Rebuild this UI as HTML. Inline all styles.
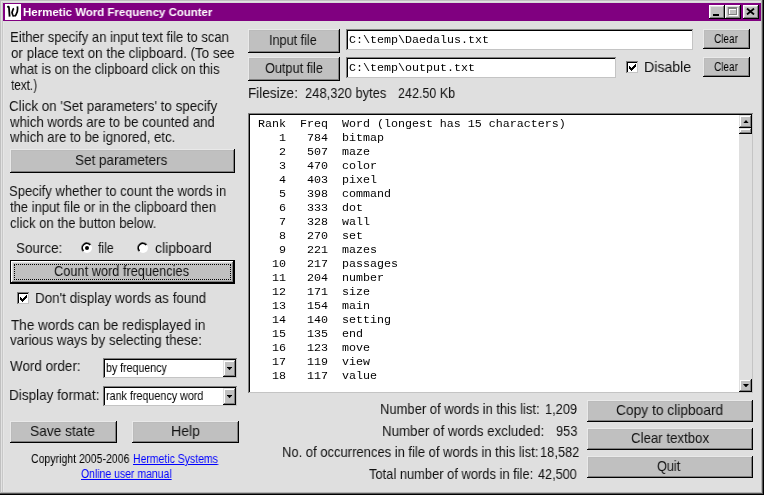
<!DOCTYPE html>
<html><head><meta charset="utf-8"><style>
html,body{margin:0;padding:0;width:764px;height:495px;overflow:hidden;background:#dfdfdf}
body{position:relative;font-family:'Liberation Sans', sans-serif}
.t{will-change:transform}
</style></head><body>
<div style="position:absolute;left:0px;top:0px;width:764px;height:1px;background:#c0c0c0"></div>
<div style="position:absolute;left:0px;top:0px;width:1px;height:495px;background:#c0c0c0"></div>
<div style="position:absolute;left:1px;top:1px;width:762px;height:1px;background:#e2e2e2"></div>
<div style="position:absolute;left:1px;top:1px;width:1px;height:493px;background:#e2e2e2"></div>
<div style="position:absolute;left:2px;top:2px;width:760px;height:1px;background:#d8dad8"></div>
<div style="position:absolute;left:2px;top:2px;width:1px;height:491px;background:#c8c8c8"></div>
<div style="position:absolute;left:3px;top:3px;width:1px;height:489px;background:#e6e6e6"></div>
<div style="position:absolute;left:761px;top:1px;width:1px;height:493px;background:#b4b4b4"></div>
<div style="position:absolute;left:1px;top:492px;width:761px;height:1px;background:#b4b4b4"></div>
<div style="position:absolute;left:762px;top:0px;width:1px;height:495px;background:#555"></div>
<div style="position:absolute;left:0px;top:493px;width:763px;height:1px;background:#555"></div>
<div style="position:absolute;left:763px;top:0px;width:1px;height:495px;background:#000"></div>
<div style="position:absolute;left:0px;top:494px;width:764px;height:1px;background:#000"></div>
<div style="position:absolute;left:3px;top:3px;width:758px;height:18px;background:#800080"></div>
<div style="position:absolute;left:5px;top:4px;width:16px;height:16px;background:#fff"></div>
<svg style="position:absolute;left:5px;top:4px" width="16" height="16" viewBox="0 0 16 16"><path d="M2.2 2.8 L3.6 2.6 L4 4 L4.6 12.6" stroke="#000" stroke-width="1.8" fill="none" stroke-linejoin="round"/><path d="M9 4.6 L8.2 5 L7 8.6 L7.6 10.5 L8.6 12.6" stroke="#000" stroke-width="1.7" fill="none" stroke-linejoin="round"/><path d="M12.4 2.4 L12.6 4.5 L12.3 7.6 L11 10.8 L9.4 12.4" stroke="#000" stroke-width="1.7" fill="none" stroke-linejoin="round"/></svg>
<div class="t" style="position:absolute;left:22.66px;top:7.20px;font-family:'Liberation Sans', sans-serif;font-size:11.5px;line-height:11.5px;font-weight:bold;color:#fff;white-space:pre;transform:scaleX(0.9958);transform-origin:0 0;">Hermetic Word Frequency Counter</div>
<div style="position:absolute;left:709px;top:5px;width:16px;height:14px;background:#c0c0c0;box-shadow:inset -1px -1px #000, inset 1px 1px #fff, inset -2px -2px #808080, inset 2px 2px #dfdfdf"></div>
<div style="position:absolute;left:725px;top:5px;width:16px;height:14px;background:#c0c0c0;box-shadow:inset -1px -1px #000, inset 1px 1px #fff, inset -2px -2px #808080, inset 2px 2px #dfdfdf"></div>
<div style="position:absolute;left:743px;top:5px;width:16px;height:14px;background:#c0c0c0;box-shadow:inset -1px -1px #000, inset 1px 1px #fff, inset -2px -2px #808080, inset 2px 2px #dfdfdf"></div>
<div style="position:absolute;left:713px;top:14px;width:6px;height:2px;background:#000"></div>
<div style="position:absolute;left:729px;top:8px;width:9px;height:8px;box-shadow:inset 0 0 0 1px #fff, inset 0 2px #fff"></div>
<div style="position:absolute;left:728px;top:7px;width:9px;height:8px;box-shadow:inset 0 0 0 1px #808080, inset 0 2px #808080"></div>
<svg style="position:absolute;left:746px;top:8px" width="9" height="7" viewBox="0 0 9 7"><path d="M1 0.6 L8 6.4 M8 0.6 L1 6.4" stroke="#000" stroke-width="1.9"/></svg>
<div class="t" style="position:absolute;left:10.03px;top:30.20px;font-family:'Liberation Sans', sans-serif;font-size:14.5px;line-height:14.5px;font-weight:normal;color:#121212;white-space:pre;transform:scaleX(0.8993);transform-origin:0 0;">Either specify an input text file to scan</div>
<div class="t" style="position:absolute;left:10.73px;top:46.20px;font-family:'Liberation Sans', sans-serif;font-size:14.5px;line-height:14.5px;font-weight:normal;color:#121212;white-space:pre;transform:scaleX(0.9242);transform-origin:0 0;">or place text on the clipboard. (To see</div>
<div class="t" style="position:absolute;left:9.94px;top:62.30px;font-family:'Liberation Sans', sans-serif;font-size:14.5px;line-height:14.5px;font-weight:normal;color:#121212;white-space:pre;transform:scaleX(0.9065);transform-origin:0 0;">what is on the clipboard click on this</div>
<div class="t" style="position:absolute;left:10.78px;top:78.10px;font-family:'Liberation Sans', sans-serif;font-size:14.5px;line-height:14.5px;font-weight:normal;color:#121212;white-space:pre;transform:scaleX(0.8123);transform-origin:0 0;">text.)</div>
<div class="t" style="position:absolute;left:9.21px;top:98.70px;font-family:'Liberation Sans', sans-serif;font-size:14.5px;line-height:14.5px;font-weight:normal;color:#121212;white-space:pre;transform:scaleX(0.9232);transform-origin:0 0;">Click on &#x27;Set parameters&#x27; to specify</div>
<div class="t" style="position:absolute;left:9.94px;top:114.50px;font-family:'Liberation Sans', sans-serif;font-size:14.5px;line-height:14.5px;font-weight:normal;color:#121212;white-space:pre;transform:scaleX(0.9107);transform-origin:0 0;">which words are to be counted and</div>
<div class="t" style="position:absolute;left:9.94px;top:130.30px;font-family:'Liberation Sans', sans-serif;font-size:14.5px;line-height:14.5px;font-weight:normal;color:#121212;white-space:pre;transform:scaleX(0.9072);transform-origin:0 0;">which are to be ignored, etc.</div>
<div class="t" style="position:absolute;left:9.24px;top:184.10px;font-family:'Liberation Sans', sans-serif;font-size:14.5px;line-height:14.5px;font-weight:normal;color:#121212;white-space:pre;transform:scaleX(0.9013);transform-origin:0 0;">Specify whether to count the words in</div>
<div class="t" style="position:absolute;left:9.94px;top:199.80px;font-family:'Liberation Sans', sans-serif;font-size:14.5px;line-height:14.5px;font-weight:normal;color:#121212;white-space:pre;transform:scaleX(0.8969);transform-origin:0 0;">the input file or in the clipboard then</div>
<div class="t" style="position:absolute;left:9.94px;top:215.60px;font-family:'Liberation Sans', sans-serif;font-size:14.5px;line-height:14.5px;font-weight:normal;color:#121212;white-space:pre;transform:scaleX(0.9032);transform-origin:0 0;">click on the button below.</div>
<div class="t" style="position:absolute;left:10.73px;top:317.70px;font-family:'Liberation Sans', sans-serif;font-size:14.5px;line-height:14.5px;font-weight:normal;color:#121212;white-space:pre;transform:scaleX(0.9308);transform-origin:0 0;">The words can be redisplayed in</div>
<div class="t" style="position:absolute;left:9.94px;top:333.10px;font-family:'Liberation Sans', sans-serif;font-size:14.5px;line-height:14.5px;font-weight:normal;color:#121212;white-space:pre;transform:scaleX(0.9228);transform-origin:0 0;">various ways by selecting these:</div>
<div style="position:absolute;left:10px;top:149px;width:225px;height:24px;background:#c0c0c0;box-shadow:inset -1px -1px #000, inset 1px 1px #e9e9e9, inset -2px -2px #808080, inset 2px 2px #bbbbbb"></div>
<div class="t" style="position:absolute;left:74.67px;top:152.90px;font-family:'Liberation Sans', sans-serif;font-size:14.5px;line-height:14.5px;font-weight:normal;color:#121212;white-space:pre;transform:scaleX(0.9307);transform-origin:0 0;">Set parameters</div>
<div class="t" style="position:absolute;left:16.21px;top:240.70px;font-family:'Liberation Sans', sans-serif;font-size:14.5px;line-height:14.5px;font-weight:normal;color:#121212;white-space:pre;transform:scaleX(0.9250);transform-origin:0 0;">Source:</div>
<svg style="position:absolute;left:80.5px;top:241.5px" width="12" height="12" viewBox="0 0 12 12"><circle cx="6" cy="6" r="5" fill="#fff"/><path d="M10.2 2.6 A5.3 5.3 0 0 0 1.6 9.4" stroke="#808080" stroke-width="1" fill="none"/><path d="M9.3 2.9 A4.3 4.3 0 0 0 2.5 8.9" stroke="#000" stroke-width="1.5" fill="none"/><circle cx="6" cy="6" r="2" fill="#000"/></svg>
<div class="t" style="position:absolute;left:98.20px;top:241.00px;font-family:'Liberation Sans', sans-serif;font-size:14.5px;line-height:14.5px;font-weight:normal;color:#121212;white-space:pre;transform:scaleX(0.8451);transform-origin:0 0;">file</div>
<svg style="position:absolute;left:136.5px;top:241.5px" width="12" height="12" viewBox="0 0 12 12"><circle cx="6" cy="6" r="5" fill="#fff"/><path d="M10.2 2.6 A5.3 5.3 0 0 0 1.6 9.4" stroke="#808080" stroke-width="1" fill="none"/><path d="M9.3 2.9 A4.3 4.3 0 0 0 2.5 8.9" stroke="#000" stroke-width="1.5" fill="none"/></svg>
<div class="t" style="position:absolute;left:154.71px;top:241.00px;font-family:'Liberation Sans', sans-serif;font-size:14.5px;line-height:14.5px;font-weight:normal;color:#121212;white-space:pre;transform:scaleX(0.9655);transform-origin:0 0;">clipboard</div>
<div style="position:absolute;left:10px;top:260px;width:225px;height:24px;background:#c0c0c0;box-shadow:inset 0 0 0 1px #000, inset -2px -2px #000, inset 2px 2px #fff, inset -3px -3px #808080, inset 3px 3px #dfdfdf"></div>
<div style="position:absolute;left:14px;top:264px;width:217px;height:16px;border:1px dotted #000;box-sizing:border-box"></div>
<div class="t" style="position:absolute;left:54.09px;top:264.30px;font-family:'Liberation Sans', sans-serif;font-size:14.5px;line-height:14.5px;font-weight:normal;color:#121212;white-space:pre;transform:scaleX(0.8814);transform-origin:0 0;">Count word frequencies</div>
<div style="position:absolute;left:17px;top:292px;width:12px;height:12px;background:#fff;box-shadow:inset 1px 1px #808080, inset -1px -1px #c4c4c4, inset 2px 2px #000"></div>
<svg style="position:absolute;left:19.5px;top:294.5px" width="7" height="7" viewBox="0 0 7 7" shape-rendering="crispEdges"><rect x="6" y="0" width="1" height="1"/><rect x="5" y="1" width="1" height="1"/><rect x="6" y="1" width="1" height="1"/><rect x="0" y="2" width="1" height="1"/><rect x="4" y="2" width="1" height="1"/><rect x="5" y="2" width="1" height="1"/><rect x="6" y="2" width="1" height="1"/><rect x="0" y="3" width="1" height="1"/><rect x="1" y="3" width="1" height="1"/><rect x="3" y="3" width="1" height="1"/><rect x="4" y="3" width="1" height="1"/><rect x="5" y="3" width="1" height="1"/><rect x="0" y="4" width="1" height="1"/><rect x="1" y="4" width="1" height="1"/><rect x="2" y="4" width="1" height="1"/><rect x="3" y="4" width="1" height="1"/><rect x="4" y="4" width="1" height="1"/><rect x="1" y="5" width="1" height="1"/><rect x="2" y="5" width="1" height="1"/><rect x="3" y="5" width="1" height="1"/><rect x="2" y="6" width="1" height="1"/></svg>
<div class="t" style="position:absolute;left:34.68px;top:291.00px;font-family:'Liberation Sans', sans-serif;font-size:14.5px;line-height:14.5px;font-weight:normal;color:#121212;white-space:pre;transform:scaleX(0.9257);transform-origin:0 0;">Don&#x27;t display words as found</div>
<div class="t" style="position:absolute;left:9.93px;top:359.30px;font-family:'Liberation Sans', sans-serif;font-size:14.5px;line-height:14.5px;font-weight:normal;color:#121212;white-space:pre;transform:scaleX(0.9254);transform-origin:0 0;">Word order:</div>
<div class="t" style="position:absolute;left:9.20px;top:387.50px;font-family:'Liberation Sans', sans-serif;font-size:14.5px;line-height:14.5px;font-weight:normal;color:#121212;white-space:pre;transform:scaleX(0.9342);transform-origin:0 0;">Display format:</div>
<div style="position:absolute;left:103px;top:358px;width:134px;height:20px;background:#fff;box-shadow:inset 1px 1px #808080, inset -1px -1px #c4c4c4, inset 2px 2px #000"></div>
<div style="position:absolute;left:223px;top:360px;width:13px;height:17px;background:#c0c0c0;box-shadow:inset -1px -1px #000, inset 1px 1px #dfdfdf, inset -2px -2px #808080, inset 2px 2px #fff"></div>
<svg style="position:absolute;left:227px;top:367px" width="5" height="3" viewBox="0 0 5 3"><path d="M-0.3 0 H5.3 L2.5 3.2 Z" fill="#000"/></svg>
<div class="t" style="position:absolute;left:106.48px;top:362.00px;font-family:'Liberation Sans', sans-serif;font-size:12px;line-height:12px;font-weight:normal;color:#000;white-space:pre;transform:scaleX(0.8840);transform-origin:0 0;">by frequency</div>
<div style="position:absolute;left:103px;top:386px;width:134px;height:20px;background:#fff;box-shadow:inset 1px 1px #808080, inset -1px -1px #c4c4c4, inset 2px 2px #000"></div>
<div style="position:absolute;left:223px;top:388px;width:13px;height:17px;background:#c0c0c0;box-shadow:inset -1px -1px #000, inset 1px 1px #dfdfdf, inset -2px -2px #808080, inset 2px 2px #fff"></div>
<svg style="position:absolute;left:227px;top:395px" width="5" height="3" viewBox="0 0 5 3"><path d="M-0.3 0 H5.3 L2.5 3.2 Z" fill="#000"/></svg>
<div class="t" style="position:absolute;left:106.48px;top:390.40px;font-family:'Liberation Sans', sans-serif;font-size:12px;line-height:12px;font-weight:normal;color:#000;white-space:pre;transform:scaleX(0.8950);transform-origin:0 0;">rank frequency word</div>
<div style="position:absolute;left:10px;top:421px;width:107px;height:22px;background:#c0c0c0;box-shadow:inset -1px -1px #000, inset 1px 1px #e9e9e9, inset -2px -2px #808080, inset 2px 2px #bbbbbb"></div>
<div class="t" style="position:absolute;left:30.25px;top:424.20px;font-family:'Liberation Sans', sans-serif;font-size:14.5px;line-height:14.5px;font-weight:normal;color:#121212;white-space:pre;transform:scaleX(0.9463);transform-origin:0 0;">Save state</div>
<div style="position:absolute;left:132px;top:421px;width:107px;height:22px;background:#c0c0c0;box-shadow:inset -1px -1px #000, inset 1px 1px #e9e9e9, inset -2px -2px #808080, inset 2px 2px #bbbbbb"></div>
<div class="t" style="position:absolute;left:170.63px;top:424.20px;font-family:'Liberation Sans', sans-serif;font-size:14.5px;line-height:14.5px;font-weight:normal;color:#121212;white-space:pre;transform:scaleX(0.9718);transform-origin:0 0;">Help</div>
<div class="t" style="position:absolute;left:30.80px;top:453.30px;font-family:'Liberation Sans', sans-serif;font-size:12px;line-height:12px;font-weight:normal;color:#000;white-space:pre;transform:scaleX(0.8777);transform-origin:0 0;">Copyright 2005-2006</div>
<div class="t" style="position:absolute;left:132.57px;top:453.30px;font-family:'Liberation Sans', sans-serif;font-size:12px;line-height:12px;font-weight:normal;color:#0000ff;white-space:pre;transform:scaleX(0.8725);transform-origin:0 0;text-decoration:underline">Hermetic Systems</div>
<div class="t" style="position:absolute;left:80.65px;top:468.30px;font-family:'Liberation Sans', sans-serif;font-size:12px;line-height:12px;font-weight:normal;color:#0000ff;white-space:pre;transform:scaleX(0.8710);transform-origin:0 0;text-decoration:underline">Online user manual</div>
<div style="position:absolute;left:248px;top:29px;width:92px;height:24px;background:#c0c0c0;box-shadow:inset -1px -1px #000, inset 1px 1px #e9e9e9, inset -2px -2px #808080, inset 2px 2px #bbbbbb"></div>
<div class="t" style="position:absolute;left:269.34px;top:33.20px;font-family:'Liberation Sans', sans-serif;font-size:14.5px;line-height:14.5px;font-weight:normal;color:#121212;white-space:pre;transform:scaleX(0.8720);transform-origin:0 0;">Input file</div>
<div style="position:absolute;left:248px;top:57px;width:92px;height:24px;background:#c0c0c0;box-shadow:inset -1px -1px #000, inset 1px 1px #e9e9e9, inset -2px -2px #808080, inset 2px 2px #bbbbbb"></div>
<div class="t" style="position:absolute;left:264.72px;top:61.30px;font-family:'Liberation Sans', sans-serif;font-size:14.5px;line-height:14.5px;font-weight:normal;color:#121212;white-space:pre;transform:scaleX(0.8768);transform-origin:0 0;">Output file</div>
<div style="position:absolute;left:346px;top:29px;width:347px;height:21px;background:#fff;box-shadow:inset 1px 1px #808080, inset -1px -1px #c4c4c4, inset 2px 2px #000"></div>
<div class="t" style="position:absolute;left:349.00px;top:35.10px;font-family:'Liberation Mono', monospace;font-size:11.67px;line-height:11.67px;font-weight:normal;color:#000;white-space:pre;">C:\temp\Daedalus.txt</div>
<div style="position:absolute;left:346px;top:57px;width:270px;height:21px;background:#fff;box-shadow:inset 1px 1px #808080, inset -1px -1px #c4c4c4, inset 2px 2px #000"></div>
<div class="t" style="position:absolute;left:349.00px;top:63.10px;font-family:'Liberation Mono', monospace;font-size:11.67px;line-height:11.67px;font-weight:normal;color:#000;white-space:pre;">C:\temp\output.txt</div>
<div style="position:absolute;left:626px;top:61px;width:12px;height:12px;background:#fff;box-shadow:inset 1px 1px #808080, inset -1px -1px #c4c4c4, inset 2px 2px #000"></div>
<svg style="position:absolute;left:628.5px;top:63.5px" width="7" height="7" viewBox="0 0 7 7" shape-rendering="crispEdges"><rect x="6" y="0" width="1" height="1"/><rect x="5" y="1" width="1" height="1"/><rect x="6" y="1" width="1" height="1"/><rect x="0" y="2" width="1" height="1"/><rect x="4" y="2" width="1" height="1"/><rect x="5" y="2" width="1" height="1"/><rect x="6" y="2" width="1" height="1"/><rect x="0" y="3" width="1" height="1"/><rect x="1" y="3" width="1" height="1"/><rect x="3" y="3" width="1" height="1"/><rect x="4" y="3" width="1" height="1"/><rect x="5" y="3" width="1" height="1"/><rect x="0" y="4" width="1" height="1"/><rect x="1" y="4" width="1" height="1"/><rect x="2" y="4" width="1" height="1"/><rect x="3" y="4" width="1" height="1"/><rect x="4" y="4" width="1" height="1"/><rect x="1" y="5" width="1" height="1"/><rect x="2" y="5" width="1" height="1"/><rect x="3" y="5" width="1" height="1"/><rect x="2" y="6" width="1" height="1"/></svg>
<div class="t" style="position:absolute;left:643.62px;top:59.80px;font-family:'Liberation Sans', sans-serif;font-size:14.5px;line-height:14.5px;font-weight:normal;color:#121212;white-space:pre;transform:scaleX(0.9747);transform-origin:0 0;">Disable</div>
<div style="position:absolute;left:703px;top:29px;width:47px;height:20px;background:#c0c0c0;box-shadow:inset -1px -1px #000, inset 1px 1px #e9e9e9, inset -2px -2px #808080, inset 2px 2px #bbbbbb"></div>
<div class="t" style="position:absolute;left:714.20px;top:33.40px;font-family:'Liberation Sans', sans-serif;font-size:12px;line-height:12px;font-weight:normal;color:#000;white-space:pre;transform:scaleX(0.8338);transform-origin:0 0;">Clear</div>
<div style="position:absolute;left:703px;top:57px;width:47px;height:20px;background:#c0c0c0;box-shadow:inset -1px -1px #000, inset 1px 1px #e9e9e9, inset -2px -2px #808080, inset 2px 2px #bbbbbb"></div>
<div class="t" style="position:absolute;left:714.20px;top:61.40px;font-family:'Liberation Sans', sans-serif;font-size:12px;line-height:12px;font-weight:normal;color:#000;white-space:pre;transform:scaleX(0.8338);transform-origin:0 0;">Clear</div>
<div class="t" style="position:absolute;left:247.66px;top:86.30px;font-family:'Liberation Sans', sans-serif;font-size:14.5px;line-height:14.5px;font-weight:normal;color:#121212;white-space:pre;transform:scaleX(0.9376);transform-origin:0 0;">Filesize:</div>
<div class="t" style="position:absolute;left:305.25px;top:86.30px;font-family:'Liberation Sans', sans-serif;font-size:14.5px;line-height:14.5px;font-weight:normal;color:#121212;white-space:pre;transform:scaleX(0.8934);transform-origin:0 0;">248,320 bytes</div>
<div class="t" style="position:absolute;left:398.34px;top:86.30px;font-family:'Liberation Sans', sans-serif;font-size:14.5px;line-height:14.5px;font-weight:normal;color:#121212;white-space:pre;transform:scaleX(0.8645);transform-origin:0 0;">242.50 Kb</div>
<div style="position:absolute;left:248px;top:113px;width:505px;height:280px;background:#fff;box-shadow:inset 1px 1px #808080, inset -1px -1px #c4c4c4, inset 2px 2px #000"></div>
<div style="position:absolute;left:739px;top:115px;width:13px;height:276px;background:#dfdfdf"></div>
<div style="position:absolute;left:739px;top:115px;width:13px;height:13px;background:#c0c0c0;box-shadow:inset -1px -1px #000, inset 1px 1px #dfdfdf, inset -2px -2px #808080, inset 2px 2px #fff"></div>
<svg style="position:absolute;left:742.5px;top:119.8px" width="6" height="3.4" viewBox="0 0 6 3.4"><path d="M0 3.4 H6 L3 0 Z" fill="#000"/></svg>
<div style="position:absolute;left:739px;top:128px;width:13px;height:6px;background:#c0c0c0;box-shadow:inset -1px -1px #000, inset 1px 1px #dfdfdf, inset -2px -2px #808080, inset 2px 2px #fff"></div>
<div style="position:absolute;left:739px;top:379px;width:13px;height:13px;background:#c0c0c0;box-shadow:inset -1px -1px #000, inset 1px 1px #dfdfdf, inset -2px -2px #808080, inset 2px 2px #fff"></div>
<svg style="position:absolute;left:742.5px;top:383.8px" width="6" height="3.4" viewBox="0 0 6 3.4"><path d="M0 0 H6 L3 3.4 Z" fill="#000"/></svg>
<div class="t" style="position:absolute;left:258.00px;top:118.60px;font-family:'Liberation Mono', monospace;font-size:11.67px;line-height:11.67px;font-weight:normal;color:#000;white-space:pre;">Rank  Freq  Word (longest has 15 characters)</div>
<div class="t" style="position:absolute;left:258.00px;top:132.60px;font-family:'Liberation Mono', monospace;font-size:11.67px;line-height:11.67px;font-weight:normal;color:#000;white-space:pre;">   1   784  bitmap</div>
<div class="t" style="position:absolute;left:258.00px;top:146.60px;font-family:'Liberation Mono', monospace;font-size:11.67px;line-height:11.67px;font-weight:normal;color:#000;white-space:pre;">   2   507  maze</div>
<div class="t" style="position:absolute;left:258.00px;top:160.60px;font-family:'Liberation Mono', monospace;font-size:11.67px;line-height:11.67px;font-weight:normal;color:#000;white-space:pre;">   3   470  color</div>
<div class="t" style="position:absolute;left:258.00px;top:174.60px;font-family:'Liberation Mono', monospace;font-size:11.67px;line-height:11.67px;font-weight:normal;color:#000;white-space:pre;">   4   403  pixel</div>
<div class="t" style="position:absolute;left:258.00px;top:188.60px;font-family:'Liberation Mono', monospace;font-size:11.67px;line-height:11.67px;font-weight:normal;color:#000;white-space:pre;">   5   398  command</div>
<div class="t" style="position:absolute;left:258.00px;top:202.60px;font-family:'Liberation Mono', monospace;font-size:11.67px;line-height:11.67px;font-weight:normal;color:#000;white-space:pre;">   6   333  dot</div>
<div class="t" style="position:absolute;left:258.00px;top:216.60px;font-family:'Liberation Mono', monospace;font-size:11.67px;line-height:11.67px;font-weight:normal;color:#000;white-space:pre;">   7   328  wall</div>
<div class="t" style="position:absolute;left:258.00px;top:230.60px;font-family:'Liberation Mono', monospace;font-size:11.67px;line-height:11.67px;font-weight:normal;color:#000;white-space:pre;">   8   270  set</div>
<div class="t" style="position:absolute;left:258.00px;top:244.60px;font-family:'Liberation Mono', monospace;font-size:11.67px;line-height:11.67px;font-weight:normal;color:#000;white-space:pre;">   9   221  mazes</div>
<div class="t" style="position:absolute;left:258.00px;top:258.60px;font-family:'Liberation Mono', monospace;font-size:11.67px;line-height:11.67px;font-weight:normal;color:#000;white-space:pre;">  10   217  passages</div>
<div class="t" style="position:absolute;left:258.00px;top:272.60px;font-family:'Liberation Mono', monospace;font-size:11.67px;line-height:11.67px;font-weight:normal;color:#000;white-space:pre;">  11   204  number</div>
<div class="t" style="position:absolute;left:258.00px;top:286.60px;font-family:'Liberation Mono', monospace;font-size:11.67px;line-height:11.67px;font-weight:normal;color:#000;white-space:pre;">  12   171  size</div>
<div class="t" style="position:absolute;left:258.00px;top:300.60px;font-family:'Liberation Mono', monospace;font-size:11.67px;line-height:11.67px;font-weight:normal;color:#000;white-space:pre;">  13   154  main</div>
<div class="t" style="position:absolute;left:258.00px;top:314.60px;font-family:'Liberation Mono', monospace;font-size:11.67px;line-height:11.67px;font-weight:normal;color:#000;white-space:pre;">  14   140  setting</div>
<div class="t" style="position:absolute;left:258.00px;top:328.60px;font-family:'Liberation Mono', monospace;font-size:11.67px;line-height:11.67px;font-weight:normal;color:#000;white-space:pre;">  15   135  end</div>
<div class="t" style="position:absolute;left:258.00px;top:342.60px;font-family:'Liberation Mono', monospace;font-size:11.67px;line-height:11.67px;font-weight:normal;color:#000;white-space:pre;">  16   123  move</div>
<div class="t" style="position:absolute;left:258.00px;top:356.60px;font-family:'Liberation Mono', monospace;font-size:11.67px;line-height:11.67px;font-weight:normal;color:#000;white-space:pre;">  17   119  view</div>
<div class="t" style="position:absolute;left:258.00px;top:370.60px;font-family:'Liberation Mono', monospace;font-size:11.67px;line-height:11.67px;font-weight:normal;color:#000;white-space:pre;">  18   117  value</div>
<div class="t" style="position:absolute;left:380.25px;top:401.90px;font-family:'Liberation Sans', sans-serif;font-size:14.5px;line-height:14.5px;font-weight:normal;color:#121212;white-space:pre;transform:scaleX(0.8965);transform-origin:0 0;">Number of words in this list:</div>
<div class="t" style="position:absolute;left:545.00px;top:401.90px;font-family:'Liberation Sans', sans-serif;font-size:14.5px;line-height:14.5px;font-weight:normal;color:#121212;white-space:pre;transform:scaleX(0.8828);transform-origin:0 0;">1,209</div>
<div class="t" style="position:absolute;left:382.08px;top:423.80px;font-family:'Liberation Sans', sans-serif;font-size:14.5px;line-height:14.5px;font-weight:normal;color:#121212;white-space:pre;transform:scaleX(0.9186);transform-origin:0 0;">Number of words excluded:</div>
<div class="t" style="position:absolute;left:555.64px;top:423.80px;font-family:'Liberation Sans', sans-serif;font-size:14.5px;line-height:14.5px;font-weight:normal;color:#121212;white-space:pre;transform:scaleX(0.8840);transform-origin:0 0;">953</div>
<div class="t" style="position:absolute;left:281.73px;top:445.20px;font-family:'Liberation Sans', sans-serif;font-size:14.5px;line-height:14.5px;font-weight:normal;color:#121212;white-space:pre;transform:scaleX(0.8963);transform-origin:0 0;">No. of occurrences in file of words in this list:</div>
<div class="t" style="position:absolute;left:539.79px;top:445.20px;font-family:'Liberation Sans', sans-serif;font-size:14.5px;line-height:14.5px;font-weight:normal;color:#121212;white-space:pre;transform:scaleX(0.8867);transform-origin:0 0;">18,582</div>
<div class="t" style="position:absolute;left:369.47px;top:467.00px;font-family:'Liberation Sans', sans-serif;font-size:14.5px;line-height:14.5px;font-weight:normal;color:#121212;white-space:pre;transform:scaleX(0.8896);transform-origin:0 0;">Total number of words in file:</div>
<div class="t" style="position:absolute;left:537.81px;top:467.00px;font-family:'Liberation Sans', sans-serif;font-size:14.5px;line-height:14.5px;font-weight:normal;color:#121212;white-space:pre;transform:scaleX(0.8731);transform-origin:0 0;">42,500</div>
<div style="position:absolute;left:587px;top:400px;width:166px;height:22px;background:#c0c0c0;box-shadow:inset -1px -1px #000, inset 1px 1px #e9e9e9, inset -2px -2px #808080, inset 2px 2px #bbbbbb"></div>
<div class="t" style="position:absolute;left:616.25px;top:403.20px;font-family:'Liberation Sans', sans-serif;font-size:14.5px;line-height:14.5px;font-weight:normal;color:#121212;white-space:pre;transform:scaleX(0.9495);transform-origin:0 0;">Copy to clipboard</div>
<div style="position:absolute;left:587px;top:428px;width:166px;height:22px;background:#c0c0c0;box-shadow:inset -1px -1px #000, inset 1px 1px #e9e9e9, inset -2px -2px #808080, inset 2px 2px #bbbbbb"></div>
<div class="t" style="position:absolute;left:630.69px;top:431.00px;font-family:'Liberation Sans', sans-serif;font-size:14.5px;line-height:14.5px;font-weight:normal;color:#121212;white-space:pre;transform:scaleX(0.9143);transform-origin:0 0;">Clear textbox</div>
<div style="position:absolute;left:587px;top:456px;width:166px;height:22px;background:#c0c0c0;box-shadow:inset -1px -1px #000, inset 1px 1px #e9e9e9, inset -2px -2px #808080, inset 2px 2px #bbbbbb"></div>
<div class="t" style="position:absolute;left:657.33px;top:459.10px;font-family:'Liberation Sans', sans-serif;font-size:14.5px;line-height:14.5px;font-weight:normal;color:#121212;white-space:pre;transform:scaleX(0.8731);transform-origin:0 0;">Quit</div>
</body></html>
